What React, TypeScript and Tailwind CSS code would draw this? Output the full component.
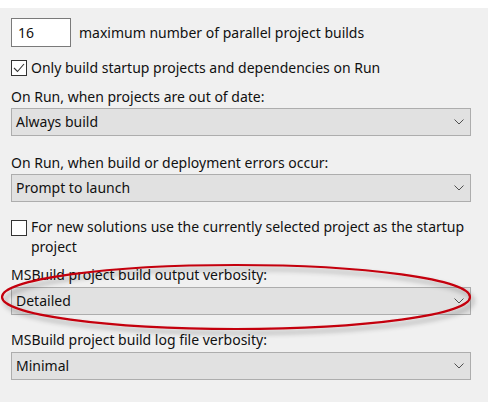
import React from "react";

const font = { fontFamily: '"Noto Sans", "Open Sans", sans-serif' };

const Chevron = () => (
  <svg width="10" height="6" viewBox="0 0 10 6" className="shrink-0">
    <polyline points="0.5,0.5 5,5 9.5,0.5" fill="none" stroke="#505050" strokeWidth="1" />
  </svg>
);

const Dropdown = ({ value }: { value: string }) => (
  <div className="flex h-[28px] w-[460px] items-center justify-between border border-[#adadad] bg-[#e1e1e1] pl-[4px] pr-[6px]">
    <span>{value}</span>
    <Chevron />
  </div>
);

const Checkbox = ({ checked }: { checked?: boolean }) => (
  <div className="flex h-[16px] w-[16px] shrink-0 items-center justify-center border border-[#333333] bg-white">
    {checked && (
      <svg width="14" height="14" viewBox="0 0 14 14">
        <polyline points="2,7 5.5,10.5 12,3" fill="none" stroke="#333333" strokeWidth="1.1" />
      </svg>
    )}
  </div>
);

export default function App() {
  return (
    <div className="relative h-[402px] w-[488px] overflow-hidden bg-white text-[14px] leading-[20px] text-[#111111]" style={font}>
      <div className="h-[8px] bg-white" />
      <div className="h-[394px] bg-[#f0f0f0] pl-[11px] pr-[17px] pt-[10px]">
        <div className="flex items-center gap-[8px]">
          <div className="flex h-[29px] w-[60px] items-center border border-[#7a7a7a] bg-white px-[6px]">16</div>
          <span>maximum number of parallel project builds</span>
        </div>

        <div className="mt-[11px] flex items-center gap-[4px]">
          <Checkbox checked />
          <span>Only build startup projects and dependencies on Run</span>
        </div>

        <div className="mt-[9px]">On Run, when projects are out of date:</div>
        <div className="mt-[1px]">
          <Dropdown value="Always build" />
        </div>

        <div className="mt-[17px]">On Run, when build or deployment errors occur:</div>
        <div className="mt-[1px]">
          <Dropdown value="Prompt to launch" />
        </div>

        <div className="mt-[15px] flex items-start gap-[4px]">
          <div className="mt-[3px]">
            <Checkbox />
          </div>
          <span>For new solutions use the currently selected project as the startup project</span>
        </div>

        <div className="mt-[8px]">MSBuild project build output verbosity:</div>
        <div className="mt-[2px]">
          <Dropdown value="Detailed" />
        </div>

        <div className="mt-[15px]">MSBuild project build log file verbosity:</div>
        <div className="mt-[2px]">
          <Dropdown value="Minimal" />
        </div>
      </div>

      <svg className="pointer-events-none absolute left-0 top-0" width="488" height="402" viewBox="0 0 488 402">
        <defs>
          <filter id="sh" x="-10%" y="-50%" width="120%" height="200%">
            <feDropShadow dx="3" dy="4" stdDeviation="2.5" floodColor="#000" floodOpacity="0.35" />
          </filter>
        </defs>
        <ellipse cx="236" cy="297" rx="234" ry="32" fill="none" stroke="#c4000e" strokeWidth="2.2" filter="url(#sh)" />
      </svg>
    </div>
  );
}
